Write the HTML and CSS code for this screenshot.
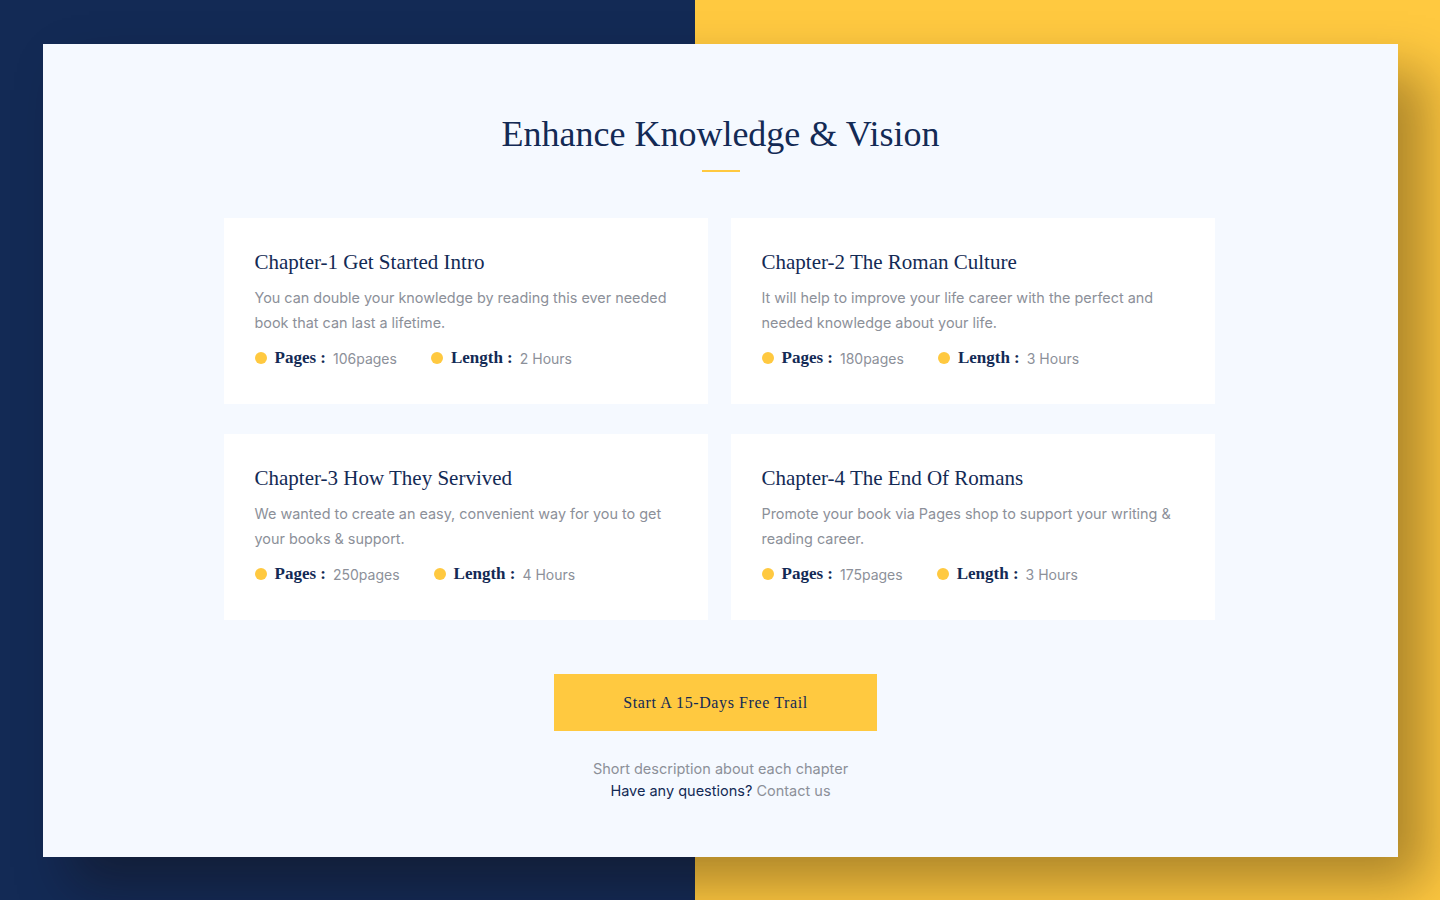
FILE: index.html
```html
<!DOCTYPE html>
<html lang="en">
<head>
<meta charset="utf-8">
<title>Enhance Knowledge & Vision</title>
<link rel="stylesheet" href="styles.css">
</head>
<body>
<div class="stage">
  <main class="panel">
    <h1 class="title">Enhance Knowledge &amp; Vision</h1>
    <div class="rule"></div>
    <section class="grid">
      <article class="card">
        <h2 class="card-title">Chapter-1 Get Started Intro</h2>
        <p class="card-text">You can double your knowledge by reading this ever needed book that can last a lifetime.</p>
        <div class="meta">
          <span class="meta-item"><span class="dot"></span><span class="meta-label">Pages :</span><span class="meta-value">106pages</span></span>
          <span class="meta-item"><span class="dot"></span><span class="meta-label">Length :</span><span class="meta-value">2 Hours</span></span>
        </div>
      </article>
      <article class="card">
        <h2 class="card-title">Chapter-2 The Roman Culture</h2>
        <p class="card-text">It will help to improve your life career with the perfect and needed knowledge about your life.</p>
        <div class="meta">
          <span class="meta-item"><span class="dot"></span><span class="meta-label">Pages :</span><span class="meta-value">180pages</span></span>
          <span class="meta-item"><span class="dot"></span><span class="meta-label">Length :</span><span class="meta-value">3 Hours</span></span>
        </div>
      </article>
      <article class="card">
        <h2 class="card-title">Chapter-3 How They Servived</h2>
        <p class="card-text">We wanted to create an easy, convenient way for you to get your books &amp; support.</p>
        <div class="meta">
          <span class="meta-item"><span class="dot"></span><span class="meta-label">Pages :</span><span class="meta-value">250pages</span></span>
          <span class="meta-item"><span class="dot"></span><span class="meta-label">Length :</span><span class="meta-value">4 Hours</span></span>
        </div>
      </article>
      <article class="card">
        <h2 class="card-title">Chapter-4 The End Of Romans</h2>
        <p class="card-text">Promote your book via Pages shop to support your writing &amp; reading career.</p>
        <div class="meta">
          <span class="meta-item"><span class="dot"></span><span class="meta-label">Pages :</span><span class="meta-value">175pages</span></span>
          <span class="meta-item"><span class="dot"></span><span class="meta-label">Length :</span><span class="meta-value">3 Hours</span></span>
        </div>
      </article>
    </section>
    <a class="cta" href="#">Start A 15-Days Free Trail</a>
    <p class="foot">Short description about each chapter<br><span class="foot-dark">Have any questions?</span> Contact us</p>
  </main>
</div>
</body>
</html>
```
FILE: styles.css
```css
* { box-sizing: border-box; }
html, body { margin: 0; padding: 0; }
body {
  width: 1440px;
  height: 900px;
  overflow: hidden;
  background: linear-gradient(90deg, #132a55 0, #132a55 695px, #ffc940 695px, #ffc940 100%);
  font-family: Inter, "Noto Sans", sans-serif;
}
.stage {
  padding: 44px 42px 43px 43px;
}
.panel {
  height: 813px;
  background: #f5f9ff;
  box-shadow: 28px 28px 50px rgba(20, 10, 0, 0.35);
  display: flex;
  flex-direction: column;
  align-items: center;
  padding-top: 68px;
}
.title {
  margin: 0;
  font-family: "Liberation Serif", "Times New Roman", serif;
  font-weight: 400;
  font-size: 36px;
  line-height: 44px;
  color: #132a55;
  letter-spacing: 0;
}
.rule {
  width: 38px;
  height: 2px;
  background: #ffc940;
  margin-top: 14px;
}
.grid {
  margin-top: 46px;
  margin-right: 3px;
  width: 991px;
  display: grid;
  grid-template-columns: 484px 484px;
  column-gap: 23px;
  row-gap: 30px;
}
.card {
  background: #ffffff;
  height: 186px;
  padding: 31px 31px 0 31px;
}
.card-title {
  margin: 0;
  font-family: "Liberation Serif", "Times New Roman", serif;
  font-weight: 400;
  font-size: 21px;
  line-height: 26px;
  color: #132a55;
}
.card-text {
  margin: 10px 0 0 0;
  font-size: 14.4px;
  line-height: 25px;
  color: #8c9099;
}
.meta {
  margin-top: 13px;
  display: flex;
  gap: 34px;
  align-items: center;
}
.meta-item {
  display: flex;
  align-items: center;
}
.dot {
  width: 12px;
  height: 12px;
  border-radius: 50%;
  background: #ffc940;
  margin-right: 8px;
}
.meta-label {
  font-family: "Liberation Serif", "Times New Roman", serif;
  font-weight: 700;
  font-size: 17px;
  color: #132a55;
  margin-right: 7px;
}
.meta-value {
  font-size: 14px;
  color: #8c9099;
}
.cta {
  margin-top: 54px;
  margin-right: 10px;
  width: 323px;
  height: 57px;
  background: #ffc940;
  display: flex;
  align-items: center;
  justify-content: center;
  font-family: "Liberation Serif", "Times New Roman", serif;
  font-size: 16px;
  font-weight: 400;
  letter-spacing: 0.6px;
  color: #132a55;
  text-decoration: none;
}
.foot {
  margin: 27px 0 0 0;
  text-align: center;
  font-size: 14.5px;
  line-height: 22px;
  color: #8c9099;
}
.foot-dark {
  color: #132a55;
}
```
